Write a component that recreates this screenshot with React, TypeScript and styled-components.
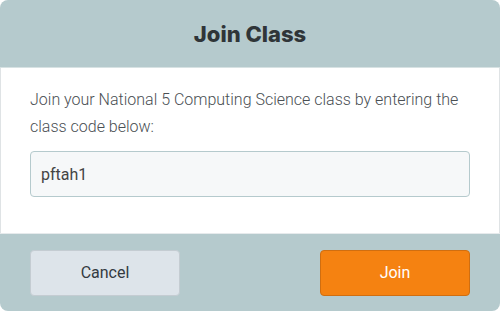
import React, { useState } from 'react';
import styled, { createGlobalStyle } from 'styled-components';

const GlobalStyle = createGlobalStyle`
  html, body {
    margin: 0;
    padding: 0;
    background: #ffffff;
  }
`;

const JoinClassModal = () => {
  const [code, setCode] = useState<string>('pftah1');

  return (
    <Modal>
      <Header>
        <Title>Join Class</Title>
      </Header>
      <Body>
        <Message>
          Join your National 5 Computing Science class by entering the class code below:
        </Message>
        <CodeInput value={code} onChange={(e) => setCode(e.target.value)} />
      </Body>
      <Footer>
        <Button>Cancel</Button>
        <Button primary>Join</Button>
      </Footer>
    </Modal>
  );
};

export default function App() {
  return (
    <>
      <GlobalStyle />
      <JoinClassModal />
    </>
  );
}

const Modal = styled.div`
  width: 500px;
  height: 311px;
  display: flex;
  flex-direction: column;
  background: #b5cacd;
  border-radius: 8px;
  overflow: hidden;
  font-family: Roboto, 'Liberation Sans', sans-serif;
`;

const Header = styled.div`
  height: 68px;
  display: flex;
  align-items: center;
  justify-content: center;
  border-bottom: 1px solid #d7e2e3;
  box-sizing: border-box;
`;

const Title = styled.h1`
  margin: 0;
  font-family: Inter, 'Liberation Sans', sans-serif;
  font-size: 22px;
  font-weight: 800;
  color: #2f3538;
`;

const Body = styled.div`
  background: #ffffff;
  border-left: 1px solid #dfe3e5;
  border-right: 1px solid #dfe3e5;
  padding: 18px 29px 36px;
  display: flex;
  flex-direction: column;
  gap: 11px;
`;

const Message = styled.p`
  margin: 0;
  font-size: 16px;
  font-weight: 300;
  line-height: 27px;
  color: #4a4f53;
`;

const CodeInput = styled.input`
  height: 46px;
  box-sizing: border-box;
  border: 1px solid #b5cacd;
  border-radius: 4px;
  background: #f6f8f9;
  padding: 0 10px;
  font-family: Roboto, 'Liberation Sans', sans-serif;
  font-size: 16px;
  color: #444;
  outline: none;
`;

const Footer = styled.div`
  flex: 1;
  display: flex;
  align-items: center;
  justify-content: space-between;
  padding: 0 30px;
  border-top: 1px solid #e6eaec;
`;

const Button = styled.button<{ primary?: boolean }>`
  width: 150px;
  height: 46px;
  border-radius: 4px;
  border: 1px solid ${({ primary }) => (primary ? '#d06e10' : '#c4ccd2')};
  background: ${({ primary }) => (primary ? '#f58211' : '#dde4ea')};
  color: ${({ primary }) => (primary ? '#ffffff' : '#333a40')};
  font-family: Roboto, 'Liberation Sans', sans-serif;
  font-size: 16px;
  cursor: pointer;
`;
